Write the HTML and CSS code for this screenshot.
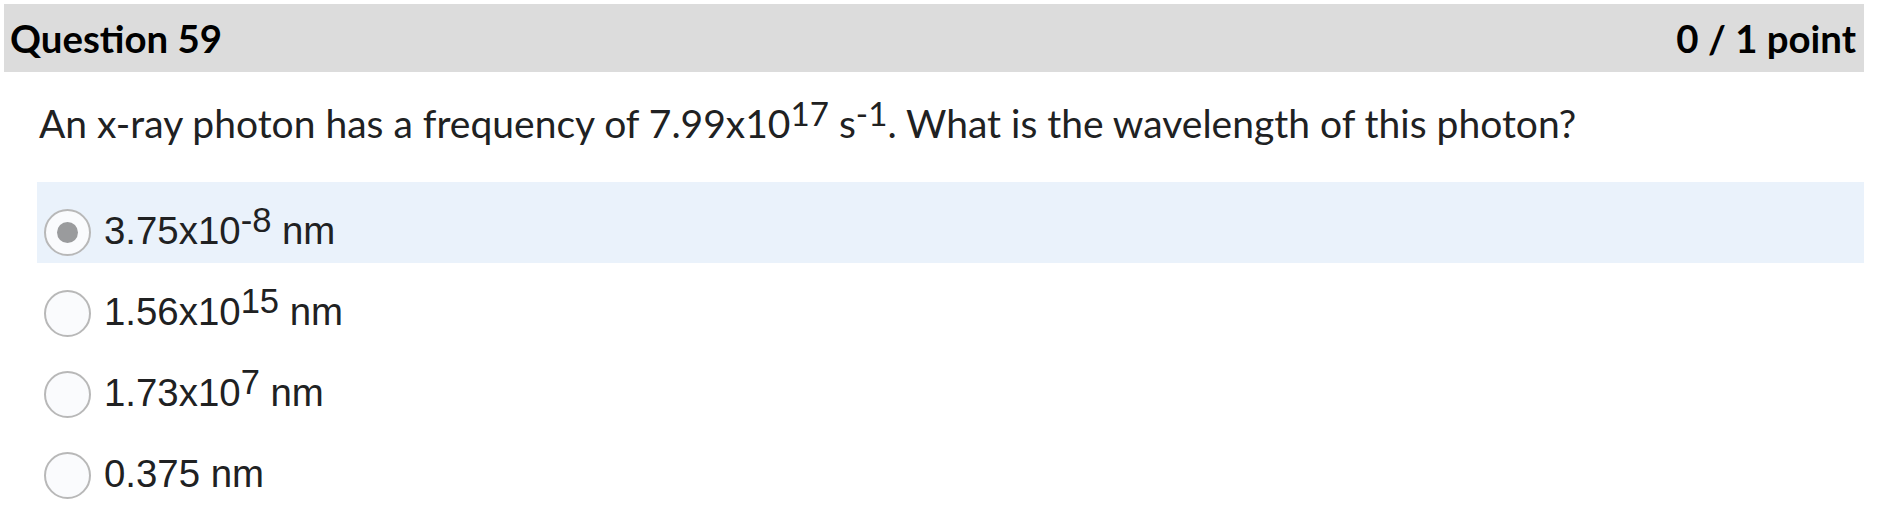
FILE: index.html
```html
<!DOCTYPE html>
<html lang="en">
<head>
<meta charset="utf-8">
<title>Question 59</title>
<link rel="stylesheet" href="styles.css">
</head>
<body>
<div class="page">
  <div class="q-header">
    <h2 class="q-title">Question 59</h2>
    <div class="q-points">0 / 1 point</div>
  </div>
  <p class="q-text">An x-ray photon has a frequency of 7.99x10<sup>17</sup> s<sup>-1</sup>. What is the wavelength of this photon?</p>
  <div class="answers">
    <label class="answer selected">
      <span class="radio checked"><span class="dot"></span></span>
      <span class="answer-text">3.75x10<sup>-8</sup> nm</span>
    </label>
    <label class="answer">
      <span class="radio"></span>
      <span class="answer-text">1.56x10<sup>15</sup> nm</span>
    </label>
    <label class="answer">
      <span class="radio"></span>
      <span class="answer-text">1.73x10<sup>7</sup> nm</span>
    </label>
    <label class="answer">
      <span class="radio"></span>
      <span class="answer-text">0.375 nm</span>
    </label>
  </div>
</div>
</body>
</html>
```
FILE: styles.css
```css
html, body {
  margin: 0;
  padding: 0;
  background: #ffffff;
}

.page {
  padding: 4px 20px 0 4px;
  color: #202122;
}

.q-header {
  display: flex;
  align-items: center;
  justify-content: space-between;
  height: 68px;
  background: #dcdcdc;
  padding: 0 8px 0 6px;
  font-family: Lato, "Liberation Sans", sans-serif;
  font-weight: 700;
  font-size: 38.4px;
  color: #000000;
}

.q-title {
  margin: 0;
  font-size: inherit;
  font-weight: inherit;
}

.q-text {
  margin: 28px 0 0 0;
  padding-left: 35px;
  font-family: Lato, "Liberation Sans", sans-serif;
  font-size: 39px;
  line-height: normal;
  color: #202122;
}

.q-text sup {
  font-size: 0.85em;
  line-height: 0;
  vertical-align: 0.36em;
}

.answer-text sup {
  font-size: 0.9em;
  line-height: 0;
  vertical-align: 0.36em;
}

.answers {
  margin-top: 36px;
  margin-left: 33px;
  display: flex;
  flex-direction: column;
}

.answer {
  display: flex;
  align-items: flex-start;
  gap: 12px;
  height: 81px;
  box-sizing: border-box;
  padding: 27px 0 0 7px;
}

.answer.selected {
  background: #eaf2fb;
}

.radio {
  flex: none;
  width: 47px;
  height: 47px;
  box-sizing: border-box;
  border: 2px solid #b8b8b8;
  border-radius: 50%;
  background: #fafbfd;
  display: flex;
  align-items: center;
  justify-content: center;
}

.dot {
  width: 21px;
  height: 21px;
  border-radius: 50%;
  background: #9a9b9d;
}

.answer-text {
  font-family: "Liberation Sans", Arial, sans-serif;
  font-size: 38.4px;
  line-height: normal;
  color: #202122;
  margin-left: 1px;
}
```
